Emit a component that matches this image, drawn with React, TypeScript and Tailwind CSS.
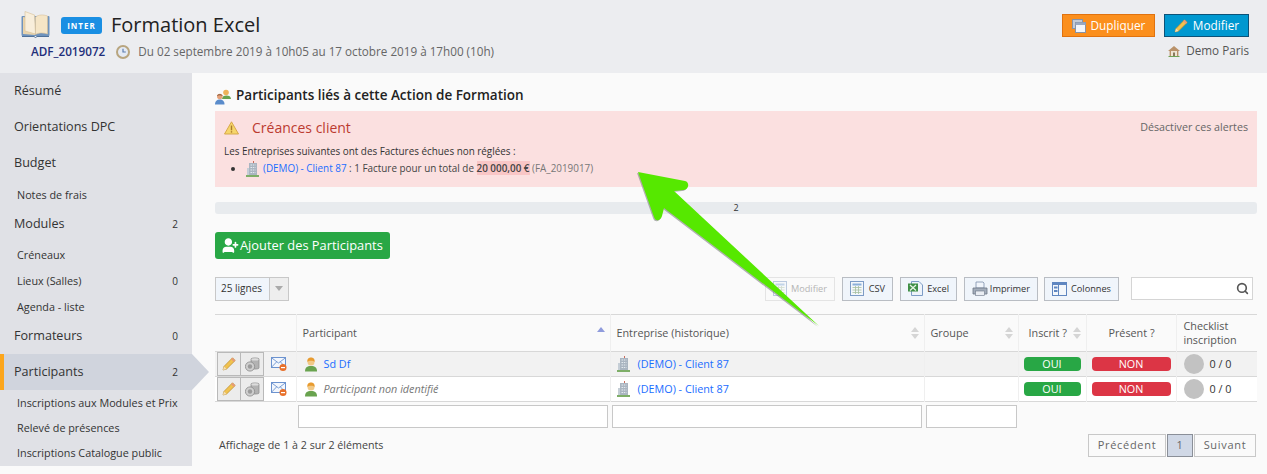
import React from 'react';
import { Search, UserPlus } from 'lucide-react';

const BookIcon = () => (
  <svg width="29" height="27" viewBox="0 0 29 27" className="shrink-0">
    <rect x="0.5" y="5" width="28" height="20" rx="1" fill="#6f93bd" />
    <path d="M2 6 L13 8 L14 24 L2 23 Z" fill="#e8d3ac" />
    <path d="M4 0.5 L13.5 4 L14.5 23 L4 20 Z" fill="#f8eedb" stroke="#d6c097" strokeWidth="0.6" />
    <path d="M14.5 6 C18 3.5 22 3.5 26.5 5 L26.5 23 C22 21.5 18 21.5 14.5 23.5 Z" fill="#f5e5c6" stroke="#d6c097" strokeWidth="0.6" />
    <path d="M1 25.5 H13 L14.5 26.5 L16 25.5 H28" stroke="#4f7199" strokeWidth="1" fill="none" />
  </svg>
);

const ClockIcon = () => (
  <svg width="14" height="14" viewBox="0 0 14 14" className="shrink-0">
    <circle cx="7" cy="7" r="6" fill="#e4eaf4" stroke="#b8a57f" strokeWidth="2" />
    <path d="M7 3.8 V7 H9.8" stroke="#5b7cb0" strokeWidth="1.2" fill="none" />
  </svg>
);

const HouseIcon = () => (
  <svg width="12" height="12" viewBox="0 0 12 12" className="shrink-0">
    <path d="M6 1 L12 6 H10.4 V11 H1.6 V6 H0 Z" fill="#b9926a" />
    <rect x="3" y="6" width="6" height="5" fill="#efe6d4" />
    <rect x="5" y="7.5" width="2" height="3.5" fill="#8a7a5c" />
    <rect x="0.5" y="11" width="11" height="1" fill="#6fa356" />
  </svg>
);

const WindowsIcon = () => (
  <svg width="14" height="14" viewBox="0 0 14 14" className="shrink-0">
    <rect x="0.5" y="0.5" width="10" height="9" fill="#c3cad6" stroke="#8793a7" />
    <rect x="3.5" y="3.5" width="10" height="10" fill="#f3f6fb" stroke="#8793a7" />
    <rect x="3.5" y="3.5" width="10" height="2.5" fill="#9aa9c2" />
  </svg>
);

const PencilIcon = ({ size = 14 }: { size?: number }) => (
  <svg width={size} height={size} viewBox="0 0 14 14" className="shrink-0">
    <path d="M10.5 0.8 L13.2 3.5 L4.6 12 L1 13 L2 9.4 Z" fill="#f1c24e" stroke="#b98a2a" strokeWidth="0.7" />
    <path d="M10.5 0.8 L13.2 3.5 L11.8 4.9 L9.1 2.2 Z" fill="#e79a7a" />
    <path d="M2 9.4 L1 13 L4.6 12 Z" fill="#f3dfb9" />
  </svg>
);

const PersonIcon = () => (
  <svg width="14" height="15" viewBox="0 0 14 15" className="shrink-0">
    <path d="M1 14.5 C1 10.5 3 9 7 9 C11 9 13 10.5 13 14.5 Z" fill="#69a34f" />
    <circle cx="7" cy="5" r="3.5" fill="#f1c987" />
    <path d="M3.4 5 C3 1.5 5 0.6 7 0.6 C9 0.6 11 1.5 10.6 5 C9.5 3.4 4.5 3.4 3.4 5 Z" fill="#e89b2f" />
  </svg>
);

const GroupIcon = () => (
  <svg width="16" height="16" viewBox="0 0 16 16" className="shrink-0">
    <path d="M7 10 C7 7.5 9 6.5 11.5 6.5 C14 6.5 16 7.5 16 10 Z" fill="#69a34f" />
    <circle cx="11" cy="3.5" r="2.8" fill="#eeb35a" />
    <path d="M0 15.5 C0 12 2 10.5 4.8 10.5 C7.6 10.5 9.5 12 9.5 15.5 Z" fill="#5a8ccb" />
    <circle cx="4.8" cy="7.5" r="2.8" fill="#e6a27a" />
    <path d="M2 7 C2 4.5 7.5 4.5 7.6 7 C6 6 3.5 6 2 7 Z" fill="#8a5a3a" />
  </svg>
);

const BuildingIcon = () => (
  <svg width="13" height="16" viewBox="0 0 13 16" className="shrink-0">
    <rect x="7" y="0" width="1" height="2" fill="#c96a5a" />
    <rect x="3" y="2" width="8" height="12" fill="#aab5c1" />
    <path d="M4.5 4 H9.5 M4.5 6.5 H9.5 M4.5 9 H9.5 M4.5 11.5 H9.5" stroke="#e3e9ee" strokeWidth="1.2" strokeDasharray="1.5 0.8" />
    <rect x="1" y="7" width="2" height="7" fill="#c5ced6" />
    <rect x="0" y="14" width="13" height="2" fill="#7eae68" />
  </svg>
);

const WarningIcon = () => (
  <svg width="15" height="14" viewBox="0 0 15 14" className="shrink-0">
    <path d="M7.5 0.8 L14.5 13 H0.5 Z" fill="#f6d66b" stroke="#d7a84a" strokeWidth="1" strokeLinejoin="round" />
    <rect x="6.8" y="4.5" width="1.4" height="4.8" fill="#a9792b" />
    <rect x="6.8" y="10.2" width="1.4" height="1.4" fill="#a9792b" />
  </svg>
);

const CoinsIcon = () => (
  <svg width="15" height="15" viewBox="0 0 15 15" className="shrink-0">
    <path d="M6 2 C6 0.6 14 0.6 14 2 V11 C14 12.4 6 12.4 6 11 Z" fill="#b2b2b2" stroke="#8a8a8a" strokeWidth="0.7" />
    <ellipse cx="10" cy="2.4" rx="3.6" ry="1.2" fill="#dcdcdc" />
    <circle cx="5" cy="9.5" r="4.6" fill="#cfcfcf" stroke="#888" strokeWidth="0.8" />
    <circle cx="5" cy="9.5" r="2.2" fill="#9b9b9b" />
  </svg>
);

const MailIcon = () => (
  <svg width="16" height="14" viewBox="0 0 16 14" className="shrink-0">
    <rect x="0.5" y="0.5" width="14" height="10" fill="#f3f7fd" stroke="#6c93cf" />
    <path d="M0.5 0.8 L7.5 6 L14.5 0.8 M0.5 10.2 L5.5 5 M14.5 10.2 L9.5 5" stroke="#6c93cf" strokeWidth="0.9" fill="none" />
    <circle cx="12" cy="10.5" r="3.5" fill="#e8702a" />
    <rect x="10" y="10" width="4" height="1.2" fill="#fff" />
  </svg>
);

const SheetIcon = () => (
  <svg width="15" height="15" viewBox="0 0 15 15" className="shrink-0">
    <rect x="0.5" y="0.5" width="13" height="14" fill="#f3f7fb" stroke="#7d9cc6" />
    <rect x="2.5" y="2.5" width="9" height="2" fill="#8bb0d9" />
    <path d="M2.5 6.5 H11.5 M2.5 9 H11.5 M2.5 11.5 H11.5 M5.5 5 V13 M8.5 5 V13" stroke="#a6bfa0" strokeWidth="0.8" />
  </svg>
);

const ExcelIcon = () => (
  <svg width="16" height="15" viewBox="0 0 16 15" className="shrink-0">
    <path d="M3.5 0.5 H11 L14.5 4 V14.5 H3.5 Z" fill="#eef3fa" stroke="#7d9cc6" />
    <rect x="0" y="2.5" width="10" height="8" fill="#3f8f46" />
    <path d="M2 4 L8 9.5 M8 4 L2 9.5" stroke="#e8f3e6" strokeWidth="1.3" />
  </svg>
);

const PrintIcon = () => (
  <svg width="16" height="15" viewBox="0 0 16 15" className="shrink-0">
    <path d="M4 7 V1 H11 L12 2 V7 Z" fill="#f1f5fb" stroke="#7d90ac" strokeWidth="0.8" />
    <path d="M1 7 H15 V13 H1 Z" fill="#a3adbb" stroke="#6c7787" strokeWidth="0.8" />
    <rect x="3.5" y="10" width="9" height="4.5" fill="#e9edf3" stroke="#6c7787" strokeWidth="0.6" />
  </svg>
);

const ColumnsIcon = () => (
  <svg width="15" height="14" viewBox="0 0 15 14" className="shrink-0">
    <rect x="0.5" y="0.5" width="14" height="13" fill="#f3f7fb" stroke="#5f86c0" />
    <rect x="0.5" y="0.5" width="14" height="2.5" fill="#5f86c0" />
    <rect x="2" y="4.5" width="3.5" height="2" fill="#5f86c0" />
    <rect x="2" y="8" width="3.5" height="2" fill="#5f86c0" />
    <path d="M6.5 3 V13.5" stroke="#5f86c0" />
  </svg>
);

const SortIcon = ({ up }: { up?: boolean }) => (
  <svg width="8" height="12" viewBox="0 0 8 12" className="shrink-0">
    <path d="M4 0 L8 5 H0 Z" fill={up ? '#8f9bdc' : '#d5d5d5'} />
    {!up && <path d="M4 12 L8 7 H0 Z" fill="#d5d5d5" />}
  </svg>
);

const navItems = [
  { label: 'Résumé', h: 'h-[36px]' },
  { label: 'Orientations DPC', h: 'h-[36px]' },
  { label: 'Budget', h: 'h-[36px]' },
  { label: 'Notes de frais', h: 'h-[28px]', sub: true },
  { label: 'Modules', h: 'h-[30px]', count: '2' },
  { label: 'Créneaux', h: 'h-[32px]', sub: true },
  { label: 'Lieux (Salles)', h: 'h-[20px]', sub: true, count: '0' },
  { label: 'Agenda - liste', h: 'h-[32px]', sub: true },
  { label: 'Formateurs', h: 'h-[31px] pb-[5px]', count: '0' },
  { label: 'Participants', h: 'h-[36px]', count: '2', active: true },
  { label: 'Inscriptions aux Modules et Prix', h: 'h-[26px]', sub: true },
  { label: 'Relevé de présences', h: 'h-[25px]', sub: true },
  { label: 'Inscriptions Catalogue public', h: 'h-[25px]', sub: true },
];

function Sidebar() {
  return (
    <nav className="w-[192px] shrink-0 bg-[#e0e1e6] text-[#333]">
      {navItems.map((item) => (
        <div
          key={item.label}
          className={`${item.h} relative flex items-center justify-between pr-[14px] ${item.sub ? 'pl-[17px] text-[10.8px]' : 'pl-[14px] text-[12.6px]'} ${item.active ? 'bg-[#d0d4dd]' : ''}`}
        >
          <span className="whitespace-nowrap">{item.label}</span>
          {item.count && <span className="text-[10px]">{item.count}</span>}
          {item.active && (
            <>
              <span className="absolute left-0 top-0 h-full w-[4px] bg-[#fca61c]" />
              <span className="absolute left-full top-0 border-y-[18px] border-l-[17px] border-y-transparent border-l-[#d0d4dd]" />
            </>
          )}
        </div>
      ))}
    </nav>
  );
}

function ToolButton({ icon, label, width, disabled }: { icon: React.ReactNode; label: string; width: string; disabled?: boolean }) {
  return (
    <button
      className={`${width} flex h-[24px] items-center justify-between border px-[7px] text-[9.2px] ${disabled ? 'border-[#e4e4e4] text-[#b5b5b5]' : 'border-[#b9bdc3] bg-[#f0f5fb] text-[#333]'}`}
    >
      <span className={disabled ? 'opacity-50' : ''}>{icon}</span>
      {label}
    </button>
  );
}

function Row({ name, italic, shaded }: { name: string; italic?: boolean; shaded?: boolean }) {
  return (
    <tr className={`${shaded ? 'h-[25px] bg-[#f2f2f2]' : 'h-[25px] bg-white'} border-b border-[#d8d8d8] text-[10.8px]`}>
      <td className="px-[2px]">
        <div className="flex items-center">
          <span className="flex h-[24px] w-[24px] items-center justify-center border border-[#b9b9b9] bg-[#ececec]"><PencilIcon /></span>
          <span className="-ml-px flex h-[24px] w-[24px] items-center justify-center border border-[#b9b9b9] bg-[#ececec]"><CoinsIcon /></span>
          <span className="ml-[7px]"><MailIcon /></span>
        </div>
      </td>
      <td className="border-l border-[#efefef] pl-[7px]">
        <div className="flex items-center gap-[6px]">
          <PersonIcon />
          {italic ? <span className="italic text-[#777]">{name}</span> : <span className="text-[#1a6dff]">{name}</span>}
        </div>
      </td>
      <td className="border-l border-[#efefef] pl-[6px]">
        <div className="flex items-center gap-[8px]">
          <BuildingIcon />
          <span className="text-[#1a6dff]">(DEMO) - Client 87</span>
        </div>
      </td>
      <td className="border-l border-[#efefef]" />
      <td className="border-l border-[#efefef] px-[5px]">
        <div className="flex h-[14px] items-center justify-center rounded-[4px] bg-[#28a745] text-white">OUI</div>
      </td>
      <td className="border-l border-[#efefef] px-[5px]">
        <div className="flex h-[14px] items-center justify-center rounded-[4px] bg-[#dc3545] text-white">NON</div>
      </td>
      <td className="border-l border-[#efefef] pl-[7px]">
        <div className="flex items-center gap-[6px] text-[#333]">
          <span className="h-[20px] w-[20px] rounded-full bg-[#c2c2c2]" />
          0 / 0
        </div>
      </td>
    </tr>
  );
}

function HeaderCell({ label, sort, up, center, pad }: { label: string; sort?: boolean; up?: boolean; center?: boolean; pad?: string }) {
  return (
    <th className={`border-l border-[#efefef] ${pad ?? 'pl-[6px]'} pr-[5px] text-[10.8px] font-normal text-[#555]`}>
      <div className={`flex items-center ${center ? 'justify-center' : 'justify-between'}`}>
        {label}
        {sort && <SortIcon up={up} />}
      </div>
    </th>
  );
}

export default function App() {
  return (
    <div className="relative h-[474px] w-[1267px] overflow-hidden bg-[#fafafa] font-['Open_Sans',sans-serif] text-[#333]">
      <header className="flex h-[73px] justify-between bg-[#ecedf0] pl-[21px] pr-[18px]">
        <div>
          <div className="flex h-[48px] items-center">
            <BookIcon />
            <span className="ml-[11px] mr-[9px] mt-[3px] flex h-[17px] w-[41px] items-center justify-center rounded-[3px] bg-[#1a8fe3] text-[8px] font-bold tracking-[1px] text-white">INTER</span>
            <h1 className="text-[20px] leading-[27px] text-[#222]">Formation Excel</h1>
          </div>
          <div className="-mt-[5px] flex items-center pl-[10px] text-[11.7px]">
            <span className="font-semibold text-[#1f2f7a]">ADF_2019072</span>
            <span className="ml-[11px] mr-[8px]"><ClockIcon /></span>
            <span className="text-[#666]">Du 02 septembre 2019 à 10h05 au 17 octobre 2019 à 17h00 (10h)</span>
          </div>
        </div>
        <div className="pt-[14px]">
          <div className="flex gap-[9px]">
            <button className="flex h-[23px] w-[93px] items-center justify-center gap-[5px] border border-[#e0720f] bg-[#fb8f1d] text-[11.8px] text-white">
              <WindowsIcon />Dupliquer
            </button>
            <button className="flex h-[23px] w-[85px] items-center justify-center gap-[5px] border border-[#0c5278] bg-[#0098d0] text-[11.8px] text-white">
              <PencilIcon />Modifier
            </button>
          </div>
          <div className="mt-[5px] flex items-center justify-end gap-[6px] text-[11.7px] text-[#555]">
            <HouseIcon />Demo Paris
          </div>
        </div>
      </header>

      <div className="flex">
        <Sidebar />
        <main className="w-[1065px] pl-[23px]">
          <h2 className="flex h-[38px] items-end gap-[5px] pb-[6px] text-[13.5px] font-semibold text-[#222]">
            <GroupIcon />Participants liés à cette Action de Formation
          </h2>

          <section className="flex h-[76px] justify-between bg-[#fbe0e0] pl-[9px] pr-[9px]">
            <div>
              <div className="flex h-[33px] items-center gap-[13px] text-[14px] text-[#bb3b30]">
                <WarningIcon />Créances client
              </div>
              <p className="text-[9.9px] text-[#333]">Les Entreprises suivantes ont des Factures échues non réglées :</p>
              <ul className="mt-[2px] flex items-center text-[9.9px] text-[#444]">
                <li className="ml-[7px] mr-[11px] h-[4px] w-[4px] rounded-full bg-[#333]" />
                <li className="flex items-center gap-[4px]">
                  <BuildingIcon />
                  <span><span className="text-[#1a6dff]">(DEMO) - Client 87</span> : 1 Facture pour un total de <span className="bg-[#f9c6c6] font-semibold">20 000,00 €</span> <span className="text-[#777]">(FA_2019017)</span></span>
                </li>
              </ul>
            </div>
            <span className="pt-[8px] text-[10.7px] text-[#666]">Désactiver ces alertes</span>
          </section>

          <div className="mt-[15px] flex h-[12px] items-center justify-center rounded-[3px] bg-[#e8ebee] text-[9px]">2</div>

          <button className="mt-[18px] flex h-[27px] items-center gap-px rounded-[3px] bg-[#28a745] px-[7px] text-[12.85px] text-white">
            <UserPlus size={17} fill="#fff" strokeWidth={2.4} />Ajouter des Participants
          </button>

          <div className="mt-[17px] flex h-[25px] items-center justify-between">
            <div className="flex h-[24px] items-stretch border border-[#c8c8c8] bg-[#f0f5fb] text-[10px]">
              <span className="flex w-[53px] items-center pl-[5px]">25 lignes</span>
              <span className="flex w-[19px] items-center justify-center border-l border-[#c8c8c8] bg-[#eee]">
                <span className="border-x-[4px] border-t-[5px] border-x-transparent border-t-[#aaa]" />
              </span>
            </div>
            <div className="flex items-center pr-[4px]">
              <div className="flex gap-[7px]">
                <ToolButton disabled width="w-[70px]" icon={<SheetIcon />} label="Modifier" />
                <ToolButton width="w-[51px]" icon={<SheetIcon />} label="CSV" />
                <ToolButton width="w-[57px]" icon={<ExcelIcon />} label="Excel" />
                <ToolButton width="w-[74px]" icon={<PrintIcon />} label="Imprimer" />
                <div className="-ml-px">
                  <ToolButton width="w-[75px]" icon={<ColumnsIcon />} label="Colonnes" />
                </div>
              </div>
              <div className="ml-[12px] flex h-[23px] w-[122px] items-center justify-end border border-[#d5d5d5] bg-white pr-[3px]">
                <Search size={13} strokeWidth={3} color="#555" />
              </div>
            </div>
          </div>

          <table className="mt-[13px] w-[1042px] table-fixed border-collapse">
            <colgroup>
              <col className="w-[81px]" />
              <col className="w-[314px]" />
              <col className="w-[314px]" />
              <col className="w-[94px]" />
              <col className="w-[68px]" />
              <col className="w-[90px]" />
              <col className="w-[81px]" />
            </colgroup>
            <thead>
              <tr className="h-[37px] border-y border-[#d8d8d8]">
                <th />
                <HeaderCell label="Participant" sort up />
                <HeaderCell label="Entreprise (historique)" sort />
                <HeaderCell label="Groupe" sort />
                <HeaderCell label="Inscrit ?" sort pad="pl-[10px]" />
                <HeaderCell label="Présent ?" center />
                <th className="border-l border-[#efefef] pl-[7px] text-left text-[10.8px] font-normal leading-[14px] text-[#555]">Checklist inscription</th>
              </tr>
            </thead>
            <tbody>
              <Row name="Sd Df" shaded />
              <Row name="Participant non identifié" italic />
            </tbody>
          </table>

          <div className="ml-[83px] mt-[3px] flex gap-[4px]">
            <input className="h-[23px] w-[310px] border border-[#c8c8c8] bg-white" />
            <input className="h-[23px] w-[310px] border border-[#c8c8c8] bg-white" />
            <input className="h-[23px] w-[91px] border border-[#c8c8c8] bg-white" />
          </div>

          <div className="mt-[6px] flex items-center justify-between pl-[4px] pr-[1px]">
            <span className="text-[10.7px] text-[#444]">Affichage de 1 à 2 sur 2 éléments</span>
            <div className="flex gap-px text-[11px] tracking-[0.7px] text-[#666]">
              <span className="flex h-[23px] w-[78px] items-center justify-center border border-[#c8c8c8]">Précédent</span>
              <span className="flex h-[23px] w-[26px] items-center justify-center border border-[#8a8f98] bg-[#d0d8e6]">1</span>
              <span className="flex h-[23px] w-[62px] items-center justify-center border border-[#c8c8c8]">Suivant</span>
            </div>
          </div>
        </main>
      </div>

      <svg width="1267" height="474" className="pointer-events-none absolute left-0 top-0">
        <path d="M819 326 L664 208 L662 216 C660 222 655 221 654 217 L638 172 L685 181 C690 182 689 190 683 190 L674 191 Z" fill="#808080" transform="translate(-1 1)" opacity="0.6" />
        <path d="M819 326 L664 208 L662 216 C660 222 655 221 654 217 L638 172 L685 181 C690 182 689 190 683 190 L674 191 Z" fill="#56e800" />
      </svg>
    </div>
  );
}
